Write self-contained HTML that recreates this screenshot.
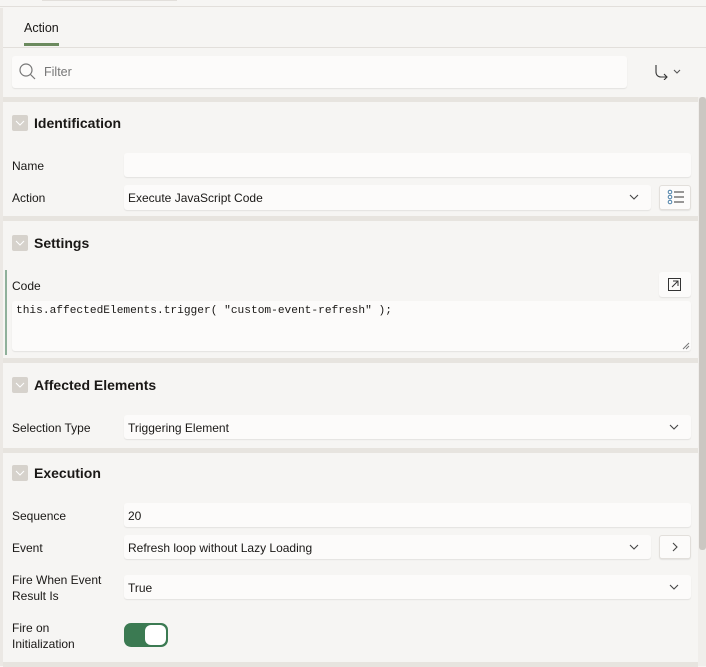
<!DOCTYPE html>
<html><head><style>
*{box-sizing:border-box;margin:0;padding:0}
body{width:706px;height:666px;overflow:hidden;background:#f6f5f3;font-family:"Liberation Sans",sans-serif;font-size:12px;color:#1a1816;position:relative}
.a{position:absolute}
.inp{position:absolute;background:#fcfbfa;border-radius:3px;box-shadow:0 1px 1px rgba(0,0,0,.08)}
.band{position:absolute;left:3px;width:695px;height:5px;background:#e7e4df}
.hd{position:absolute;left:12px;font-size:14px;font-weight:bold;display:flex;align-items:center}
.chev{width:16px;height:16px;background:#d6d2cc;border-radius:2px;margin-right:6px;display:flex;align-items:center;justify-content:center}
.lbl{position:absolute;left:12px;line-height:16px}
.txt{position:absolute;left:128px;line-height:16px}
</style></head><body>
<div class="a" style="left:0;top:0;width:706px;height:7px;background:#f6f5f3;border-bottom:1px solid #e2dfdb"></div>
<div class="a" style="left:42px;top:0;width:135px;height:1px;background:#e2dfdb"></div>
<div class="a" style="left:0;top:8px;width:3px;height:658px;background:#ebe8e4"></div>
<div class="a" style="left:24px;top:21px;font-size:12.5px">Action</div>
<div class="a" style="left:24px;top:43px;width:35px;height:3px;background:#6b8a5e"></div>
<div class="a" style="left:3px;top:47px;width:703px;height:1px;background:#e2dfdb"></div>
<div class="inp" style="left:12px;top:56px;width:615px;height:32px"></div>
<svg class="a" style="left:18px;top:62px" width="20" height="20" viewBox="0 0 20 20"><circle cx="8" cy="8" r="6" fill="none" stroke="#777" stroke-width="1.2"/><line x1="12.5" y1="12.5" x2="17" y2="17" stroke="#777" stroke-width="1.2"/></svg>
<div class="a" style="left:44px;top:65px;color:#777;font-size:12.5px">Filter</div>
<svg class="a" style="left:653px;top:64px" width="34" height="16" viewBox="0 0 34 16"><path d="M3 1v7c0 3 2 5 5 5h6M11 10l3 3-3 3" fill="none" stroke="#333" stroke-width="1.1"/><path d="M21 6l3 3 3-3" fill="none" stroke="#555" stroke-width="1.1"/></svg>
<div class="a" style="left:698px;top:97px;width:8px;height:569px;background:#f0eeeb"></div>
<div class="a" style="left:699px;top:97px;width:7px;height:453px;background:#cbc7c2;border-radius:3px"></div>
<div class="band" style="top:97px"></div>
<div class="hd" style="top:115px"><span class="chev"><svg width="10" height="6"><path d="M1 1l4 4 4-4" fill="none" stroke="#fff" stroke-width="1"/></svg></span>Identification</div>
<div class="lbl" style="top:158px">Name</div>
<div class="inp" style="left:124px;top:153px;width:567px;height:24px"></div>
<div class="lbl" style="top:190px">Action</div>
<div class="inp" style="left:124px;top:185px;width:527px;height:25px"></div>
<div class="txt" style="top:190px">Execute JavaScript Code</div>
<svg class="a" style="left:629px;top:194px" width="10" height="6"><path d="M1 1l4 4 4-4" fill="none" stroke="#444" stroke-width="1.1"/></svg>
<div class="inp" style="left:659px;top:185px;width:32px;height:25px;border:1px solid #e2dfdb"></div>
<svg class="a" style="left:667px;top:189px" width="18" height="16"><circle cx="3" cy="3" r="1.8" fill="none" stroke="#4a7fa8"/><circle cx="3" cy="8" r="1.8" fill="none" stroke="#4a7fa8"/><circle cx="3" cy="13" r="1.8" fill="none" stroke="#4a7fa8"/><path d="M7 3h10M7 8h10M7 13h10" stroke="#333"/></svg>
<div class="band" style="top:216px"></div>
<div class="hd" style="top:235px"><span class="chev"><svg width="10" height="6"><path d="M1 1l4 4 4-4" fill="none" stroke="#fff" stroke-width="1"/></svg></span>Settings</div>
<div class="a" style="left:5px;top:270px;width:2px;height:85px;background:#8fb09a"></div>
<div class="lbl" style="top:278px">Code</div>
<div class="inp" style="left:659px;top:272px;width:32px;height:25px"></div>
<svg class="a" style="left:667px;top:277px" width="16" height="16"><rect x="1.5" y="1.5" width="12" height="12" fill="none" stroke="#333"/><path d="M5 10l6-6M6 4h5v5" fill="none" stroke="#333"/></svg>
<div class="inp" style="left:12px;top:301px;width:679px;height:50px"></div>
<div class="a" style="left:16px;top:305px;font-family:'Liberation Mono',monospace;font-size:11.2px">this.affectedElements.trigger( "custom-event-refresh" );</div>
<svg class="a" style="left:682px;top:342px" width="8" height="8"><path d="M1 7l6-6M4 7l3-3" stroke="#777"/></svg>
<div class="band" style="top:358px"></div>
<div class="hd" style="top:377px"><span class="chev"><svg width="10" height="6"><path d="M1 1l4 4 4-4" fill="none" stroke="#fff" stroke-width="1"/></svg></span>Affected Elements</div>
<div class="lbl" style="top:420px">Selection Type</div>
<div class="inp" style="left:124px;top:415px;width:567px;height:24px"></div>
<div class="txt" style="top:420px">Triggering Element</div>
<svg class="a" style="left:669px;top:424px" width="10" height="6"><path d="M1 1l4 4 4-4" fill="none" stroke="#444" stroke-width="1.1"/></svg>
<div class="band" style="top:448px"></div>
<div class="hd" style="top:465px"><span class="chev"><svg width="10" height="6"><path d="M1 1l4 4 4-4" fill="none" stroke="#fff" stroke-width="1"/></svg></span>Execution</div>
<div class="lbl" style="top:508px">Sequence</div>
<div class="inp" style="left:124px;top:503px;width:567px;height:24px"></div>
<div class="txt" style="top:508px">20</div>
<div class="lbl" style="top:540px">Event</div>
<div class="inp" style="left:124px;top:535px;width:527px;height:24px"></div>
<div class="txt" style="top:540px">Refresh loop without Lazy Loading</div>
<svg class="a" style="left:629px;top:544px" width="10" height="6"><path d="M1 1l4 4 4-4" fill="none" stroke="#444" stroke-width="1.1"/></svg>
<div class="inp" style="left:659px;top:535px;width:32px;height:24px;border:1px solid #e2dfdb"></div>
<svg class="a" style="left:671px;top:542px" width="8" height="10"><path d="M2 1l4 4-4 4" fill="none" stroke="#444" stroke-width="1.1"/></svg>
<div class="lbl" style="top:572px">Fire When Event<br>Result Is</div>
<div class="inp" style="left:124px;top:575px;width:567px;height:24px"></div>
<div class="txt" style="top:580px">True</div>
<svg class="a" style="left:669px;top:584px" width="10" height="6"><path d="M1 1l4 4 4-4" fill="none" stroke="#444" stroke-width="1.1"/></svg>
<div class="lbl" style="top:620px">Fire on<br>Initialization</div>
<div class="a" style="left:124px;top:623px;width:44px;height:24px;border-radius:7px;background:#3b7a52"></div>
<div class="a" style="left:145px;top:625px;width:21px;height:20px;border-radius:6px;background:#fff"></div>
<div class="band" style="top:662px"></div>
</body></html>
